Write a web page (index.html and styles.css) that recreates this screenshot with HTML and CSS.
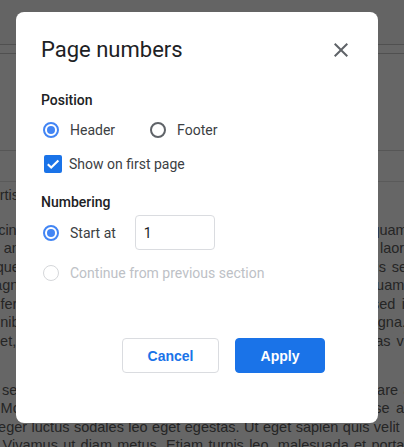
FILE: index.html
```html
<!DOCTYPE html>
<html lang="en">
<head>
<meta charset="utf-8">
<title>Page numbers</title>
<link rel="stylesheet" href="styles.css">
</head>
<body>
<div class="page">
  <div class="toolbar"></div>
  <div class="menubar"></div>
  <div class="ruler"></div>
  <div class="band"></div>
  <div class="doc">
    <p class="doc-title">Portis nunc</p>
    <div class="para">
      <div class="ln">Lacinia nulla tempor, viverra elit sed, massa pretium nisl quam diam</div>
      <div class="ln">Ut an mauris, convallis felis vitae, dapibus tincidunt ligula laoreet sit</div>
      <div class="ln">Atque cursus, blandit urna nec, faucibus ornare metus mattis sed erat</div>
      <div class="ln">Magnis dis parturient montes, nascetur ridiculus mus quam nunc</div>
      <div class="ln">at fermentum lectus, eu tristique odio augue sodales non sed iaculis.</div>
      <div class="ln">In nibh ante, sollicitudin vel porttitor quis at, rutrum nec magna. Nunc</div>
      <div class="ln">Id et, accumsan turpis, finibus ut feugiat purus lorem egestas vel erat</div>
    </div>
    <div class="para">
      <div class="ln">Ut servus pellentesque habitant morbi tristique senectus ornare at erat</div>
      <div class="ln">a. Morbi nec metus, volutpat in dolor at, posuere lacus esse ac ante</div>
      <div class="ln">Integer luctus sodales leo eget egestas. Ut eget sapien quis velit Donec</div>
      <div class="ln">id. Vivamus ut diam metus. Etiam turpis leo, malesuada et porta quam</div>
    </div>
  </div>
</div>

<div class="scrim"></div>

<div class="dialog" role="dialog" aria-label="Page numbers">
  <div class="dlg-head">
    <h1 class="dlg-title">Page numbers</h1>
    <button class="close" aria-label="Close">
      <svg width="24" height="24" viewBox="0 0 24 24"><path d="M19 6.41L17.59 5 12 10.59 6.41 5 5 6.41 10.59 12 5 17.59 6.41 19 12 13.41 17.59 19 19 17.59 13.41 12z" fill="#5f6368"/></svg>
    </button>
  </div>

  <div class="section-label pos-label">Position</div>
  <div class="opt-row pos-row">
    <label class="radio is-checked"><span class="ring"><span class="dot"></span></span>Header</label>
    <label class="radio"><span class="ring"></span>Footer</label>
  </div>
  <label class="check">
    <span class="box"><svg width="18" height="18" viewBox="0 0 18 18"><polyline points="3.8,9.2 7.2,12.6 14.4,5.4" fill="none" stroke="#fff" stroke-width="2.1"/></svg></span>Show on first page
  </label>

  <div class="section-label num-label">Numbering</div>
  <div class="opt-row start-row">
    <label class="radio is-checked"><span class="ring"><span class="dot"></span></span>Start at</label>
    <div class="num-input">1</div>
  </div>
  <label class="radio is-disabled cont-row"><span class="ring"></span>Continue from previous section</label>

  <div class="actions">
    <button class="btn btn-cancel">Cancel</button>
    <button class="btn btn-apply">Apply</button>
  </div>
</div>
</body>
</html>
```

FILE: styles.css
```css
html, body {
  margin: 0;
  padding: 0;
  width: 404px;
  height: 447px;
  overflow: hidden;
  background: #ffffff;
}

/* ---------- background document ---------- */
.page {
  width: 404px;
  height: 447px;
  overflow: hidden;
  background: #ffffff;
  font-family: "Liberation Sans", Arial, sans-serif;
}
.toolbar {
  height: 44px;
  background: #fbfbfb;
  border-bottom: 1px solid #c8c8c8;
}
.menubar {
  height: 8px;
  background: #ffffff;
  border-bottom: 1px solid #c8c8c8;
}
.ruler {
  height: 96px;
  background: #ffffff;
  border-bottom: 1px solid #d6d6d6;
}
.band {
  height: 30px;
  background: #ffffff;
  border-bottom: 1px solid #e2e2e2;
}
.doc {
  margin-left: -18px;
  width: 464px;
  padding-top: 4px;
  font-size: 14.5px;
  line-height: 18.5px;
  color: #5c5c5c;
}
.doc-title {
  margin: 0 0 16.25px 0;
}
.para + .para {
  margin-top: 30.5px;
}
.ln {
  text-align: justify;
  text-align-last: justify;
}

/* ---------- scrim ---------- */
.scrim {
  position: fixed;
  inset: 0;
  background: rgba(0, 0, 0, 0.6);
}

/* ---------- dialog ---------- */
.dialog {
  position: absolute;
  left: 16px;
  top: 12px;
  width: 362px;
  height: 411px;
  box-sizing: border-box;
  padding: 24px 25px 0 25px;
  background: #ffffff;
  border-radius: 8px;
  display: flex;
  flex-direction: column;
  font-family: Roboto, "Noto Sans", sans-serif;
  color: #3c4043;
}
.dlg-head {
  height: 28px;
  display: flex;
  align-items: center;
  justify-content: space-between;
}
.dlg-title {
  margin: 0;
  font-size: 22px;
  line-height: 28px;
  font-weight: 400;
  color: #202124;
}
.close {
  width: 24px;
  height: 24px;
  padding: 0;
  border: 0;
  background: transparent;
  display: flex;
}

.section-label {
  font-size: 14px;
  line-height: 20px;
  font-weight: 500;
  color: #202124;
}
.pos-label { margin-top: 26px; }
.num-label { margin-top: 16px; }

.opt-row {
  display: flex;
  align-items: center;
  gap: 33px;
}
.pos-row { margin-top: 8px; height: 24px; }
.start-row { margin-top: 3px; height: 35px; gap: 19px; }

.radio {
  display: flex;
  align-items: center;
  height: 24px;
  font-size: 14px;
  color: #3c4043;
}
.ring {
  width: 16px;
  height: 16px;
  box-sizing: border-box;
  margin-left: 2px;
  margin-right: 11px;
  border: 2px solid #5f6368;
  border-radius: 50%;
  display: flex;
  align-items: center;
  justify-content: center;
}
.is-checked .ring {
  border-color: #4285f4;
}
.dot {
  width: 8px;
  height: 8px;
  border-radius: 50%;
  background: #4285f4;
}
.is-disabled {
  color: #bdc1c6;
}
.is-disabled .ring {
  border: 1.5px solid #d5d7da;
}
.cont-row { margin-top: 11px; }

.check {
  margin-top: 10px;
  height: 24px;
  display: flex;
  align-items: center;
  font-size: 14px;
  color: #3c4043;
}
.box {
  width: 18px;
  height: 18px;
  margin-left: 3px;
  margin-right: 7px;
  border-radius: 2px;
  background: #1a73e8;
  display: flex;
}

.num-input {
  width: 80px;
  height: 35px;
  box-sizing: border-box;
  border: 1px solid #dadce0;
  border-radius: 4px;
  padding-left: 8px;
  display: flex;
  align-items: center;
  font-size: 14px;
  color: #202124;
}

.actions {
  margin-top: 53px;
  margin-right: 28px;
  display: flex;
  justify-content: flex-end;
  gap: 16px;
}
.btn {
  height: 35px;
  box-sizing: border-box;
  border-radius: 4px;
  font-family: "Liberation Sans", Arial, sans-serif;
  font-size: 14px;
  font-weight: 700;
  padding: 0;
  cursor: pointer;
}
.btn-cancel {
  width: 97px;
  background: #ffffff;
  border: 1px solid #dadce0;
  color: #1a73e8;
}
.btn-apply {
  width: 90px;
  background: #1a73e8;
  border: 1px solid #1a73e8;
  color: #ffffff;
}
```
